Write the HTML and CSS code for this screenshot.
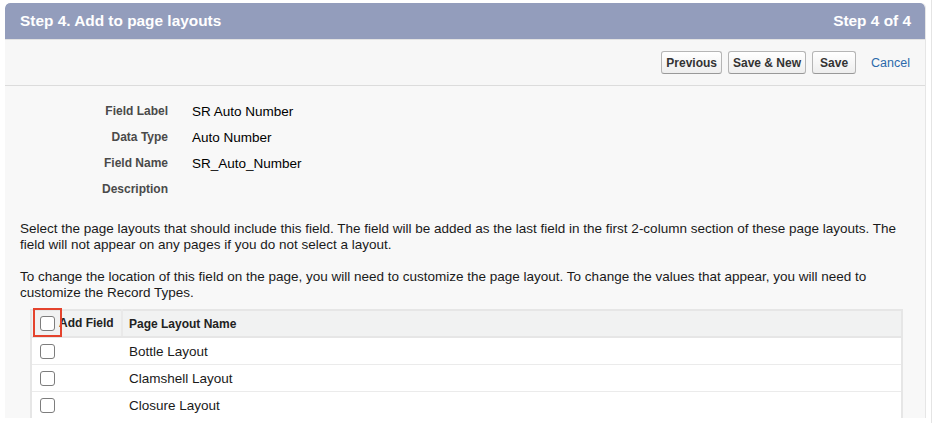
FILE: index.html
```html
<!DOCTYPE html>
<html>
<head>
<meta charset="utf-8">
<link rel="stylesheet" href="styles.css">
</head>
<body>
<div class="page">
  <div class="panel">
    <div class="header">
      <span class="title">Step 4. Add to page layouts</span>
      <span class="step">Step 4 of 4</span>
    </div>
    <div class="toolbar">
      <button class="btn">Previous</button>
      <button class="btn">Save &amp; New</button>
      <button class="btn btn-wide">Save</button>
      <a class="cancel" href="#">Cancel</a>
    </div>
    <div class="body">
      <div class="fields">
        <div class="lbl">Field Label</div><div class="val">SR Auto Number</div>
        <div class="lbl">Data Type</div><div class="val">Auto Number</div>
        <div class="lbl">Field Name</div><div class="val">SR_Auto_Number</div>
        <div class="lbl">Description</div><div class="val"></div>
      </div>
      <p class="para">Select the page layouts that should include this field. The field will be added as the last field in the first 2-column section of these page layouts. The field will not appear on any pages if you do not select a layout.</p>
      <p class="para">To change the location of this field on the page, you will need to customize the page layout. To change the values that appear, you will need to customize the Record Types.</p>
      <table class="layouts">
        <thead>
          <tr>
            <th class="c1"><input type="checkbox" class="cb">Add Field<span class="highlight"></span></th>
            <th class="c2">Page Layout Name</th>
          </tr>
        </thead>
        <tbody>
          <tr><td class="c1"><input type="checkbox" class="cb"></td><td class="c2">Bottle Layout</td></tr>
          <tr><td class="c1"><input type="checkbox" class="cb"></td><td class="c2">Clamshell Layout</td></tr>
          <tr><td class="c1"><input type="checkbox" class="cb"></td><td class="c2">Closure Layout</td></tr>
        </tbody>
      </table>
    </div>
  </div>
</div>
</body>
</html>
```
FILE: styles.css
```css
html, body {
  margin: 0;
  padding: 0;
  background: #ffffff;
  font-family: "Liberation Sans", Arial, sans-serif;
  overflow: hidden;
}
.page {
  padding: 3px 4px 0 5px;
  height: 423px;
  width: 932px;
  box-sizing: border-box;
  border-right: 1px solid #e4e4e4;
}
.panel {
  background: #f8f8f8;
  border-right: 1px solid #e6e6e6;
  height: 415px;
  overflow: hidden;
  border-radius: 5px 5px 0 0;
  margin-right: 1px;
}
.header {
  background: #939dbc;
  height: 36px;
  display: flex;
  align-items: center;
  justify-content: space-between;
  padding: 0 14px 0 15px;
  color: #fff;
  font-weight: bold;
  font-size: 15.4px;
  border-radius: 5px 5px 0 0;
}
.toolbar {
  height: 47px;
  box-sizing: border-box;
  border-top: 1px solid #e2e2e2;
  border-bottom: 1px solid #dcdcdc;
  background: #f7f7f7;
  display: flex;
  align-items: center;
  justify-content: flex-end;
  gap: 6px;
  padding: 0 15px 0 0;
}
.btn {
  height: 23px;
  font-family: "Liberation Sans", Arial, sans-serif;
  font-weight: bold;
  font-size: 12px;
  color: #333;
  background: linear-gradient(#ffffff, #eeeeee);
  border: 1px solid #b5b5b5;
  border-bottom-color: #999;
  border-radius: 3px;
  padding: 0 4px;
  margin: 0;
}
.btn-wide {
  padding: 0 7px;
}
.cancel {
  color: #2c6aab;
  font-size: 12.5px;
  text-decoration: none;
  margin-left: 9px;
}
.body {
  padding: 12px 0 0 15px;
}
.fields {
  display: grid;
  grid-template-columns: 148px 1fr;
  column-gap: 24px;
  grid-auto-rows: 26px;
  align-items: center;
}
.lbl {
  text-align: right;
  font-weight: bold;
  font-size: 12px;
  color: #4a4a4a;
}
.val {
  font-size: 13.5px;
  color: #000;
}
.para {
  font-size: 13.5px;
  line-height: 16px;
  color: #1a1a1a;
  margin: 19px 20px 0 0;
}
.para + .para {
  margin-top: 16px;
}
.layouts {
  margin: 8px 0 0 10px;
  width: 873px;
  border-collapse: collapse;
  border: 2px solid #e6e6e6;
  font-size: 13.5px;
  color: #1a1a1a;
  background: #fff;
}
.layouts th {
  background: #f1f2f2;
  font-weight: bold;
  font-size: 12px;
  text-align: left;
  height: 25px;
  border-bottom: 2px solid #e6e6e6;
  padding: 0;
  color: #222;
}
.layouts th.c1 {
  position: relative;
}
.layouts th.c2 {
  border-left: 2px solid #e9e9e9;
  padding-left: 6px;
}
.layouts td {
  height: 26px;
  border-bottom: 1px solid #ebebeb;
  padding: 0;
}
.layouts td.c2 {
  padding-left: 7px;
}
.c1 {
  width: 81px;
  padding-left: 8px !important;
  white-space: nowrap;
}
.cb {
  appearance: none;
  -webkit-appearance: none;
  width: 15px;
  height: 15px;
  margin: 0 4px 0 0;
  border: 1px solid #7d7d7d;
  border-radius: 3px;
  background: #fff;
  vertical-align: middle;
  box-sizing: border-box;
}
.highlight {
  position: absolute;
  left: 1px;
  top: -3px;
  width: 29px;
  height: 29px;
  border: 2px solid #e4432d;
  box-sizing: border-box;
}
```
